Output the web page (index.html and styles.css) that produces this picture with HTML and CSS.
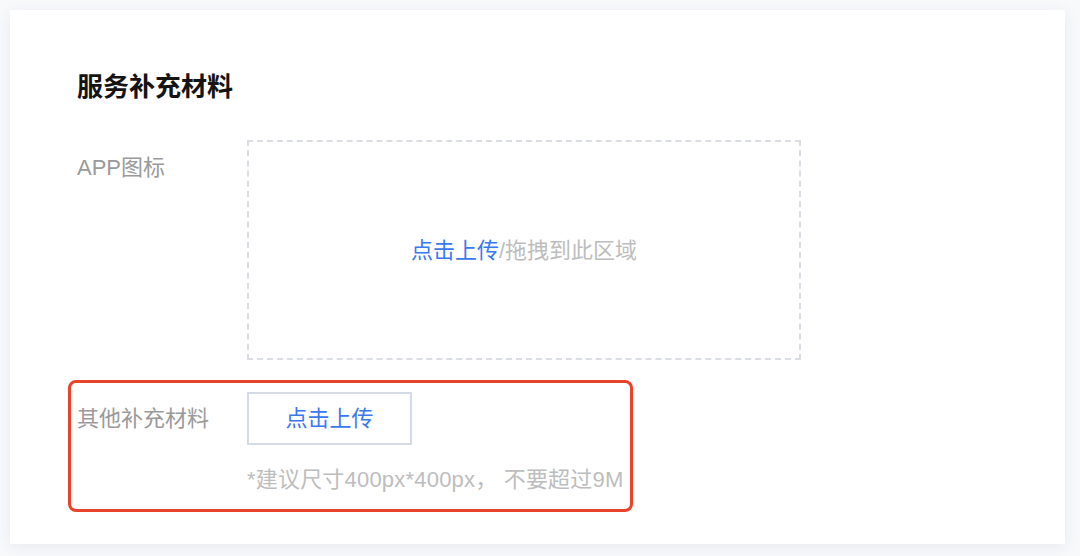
FILE: index.html
```html
<!DOCTYPE html>
<html lang="zh-CN">
<head>
<meta charset="utf-8">
<title>服务补充材料</title>
<link rel="stylesheet" href="styles.css">
</head>
<body>
<div class="card">
  <h2 class="title">服务补充材料</h2>
  <div class="form-row first-row">
    <div class="label label-top">APP图标</div>
    <div class="dropzone">
      <span class="link">点击上传</span><span class="muted">/拖拽到此区域</span>
    </div>
  </div>
  <div class="highlight">
    <div class="form-row center">
      <div class="label">其他补充材料</div>
      <button class="upload-btn">点击上传</button>
    </div>
    <div class="hint">*建议尺寸400px*400px， 不要超过9M</div>
  </div>
</div>
</body>
</html>
```

FILE: styles.css
```css
* { box-sizing: border-box; }
html, body {
  margin: 0;
  padding: 0;
  background: #f8f9fb;
  font-family: "Liberation Sans", "Noto Sans CJK SC", sans-serif;
}
body {
  padding: 10px 15px 12px 10px;
  height: 556px;
  overflow: hidden;
}
.card {
  background: #ffffff;
  height: 534px;
  padding: 60px 0 0 67px;
  box-shadow: 0 3px 14px rgba(40, 50, 90, 0.08);
}
.title {
  margin: 0;
  font-size: 26px;
  line-height: 34px;
  font-weight: 700;
  color: #141414;
}
.form-row {
  display: flex;
  align-items: flex-start;
}
.form-row.center { align-items: center; }
.first-row { margin-top: 36px; }
.label {
  width: 170px;
  flex: none;
  font-size: 22px;
  line-height: 30px;
  color: #9a9a9a;
}
.label-top { margin-top: 13px; }
.dropzone {
  width: 554px;
  height: 220px;
  border: 2px dashed #dadde3;
  display: flex;
  align-items: center;
  justify-content: center;
  font-size: 22px;
  line-height: 30px;
  padding-top: 2px;
}
.link { color: #3a78f2; }
.muted { color: #bdbdbd; }
.highlight {
  margin: 20px 0 0 -9px;
  width: 565px;
  border: 3px solid #e8432b;
  border-radius: 8px;
  padding: 9px 7px 14px 6px;
}
.upload-btn {
  width: 165px;
  height: 53px;
  border: 2px solid #d4dbe7;
  background: #ffffff;
  color: #3a78f2;
  font-family: "Liberation Sans", "Noto Sans CJK SC", sans-serif;
  font-size: 22px;
  line-height: 30px;
  padding: 0;
  margin: 0;
}
.hint {
  margin: 20px 0 0 170px;
  font-size: 22px;
  line-height: 30px;
  color: #bdbdbd;
  white-space: nowrap;
  letter-spacing: 0.2px;
}
```
